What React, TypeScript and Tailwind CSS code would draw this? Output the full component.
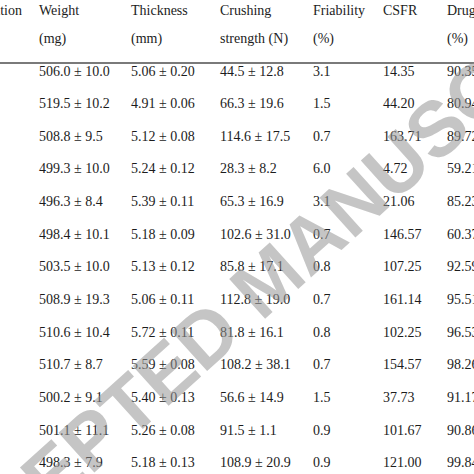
const HEAD_1 = ["Formulation", "Weight", "Thickness", "Crushing", "Friability", "CSFR", "Drug content"];
const HEAD_2 = ["", "(mg)", "(mm)", "strength (N)", "(%)", "", "(%)"];

const ROWS = [
  ["506.0 ± 10.0", "5.06 ± 0.20", "44.5 ± 12.8", "3.1", "14.35", "90.35"],
  ["519.5 ± 10.2", "4.91 ± 0.06", "66.3 ± 19.6", "1.5", "44.20", "80.94"],
  ["508.8 ± 9.5", "5.12 ± 0.08", "114.6 ± 17.5", "0.7", "163.71", "89.72"],
  ["499.3 ± 10.0", "5.24 ± 0.12", "28.3 ± 8.2", "6.0", "4.72", "59.21"],
  ["496.3 ± 8.4", "5.39 ± 0.11", "65.3 ± 16.9", "3.1", "21.06", "85.23"],
  ["498.4 ± 10.1", "5.18 ± 0.09", "102.6 ± 31.0", "0.7", "146.57", "60.37"],
  ["503.5 ± 10.0", "5.13 ± 0.12", "85.8 ± 17.1", "0.8", "107.25", "92.59"],
  ["508.9 ± 19.3", "5.06 ± 0.11", "112.8 ± 19.0", "0.7", "161.14", "95.51"],
  ["510.6 ± 10.4", "5.72 ± 0.11", "81.8 ± 16.1", "0.8", "102.25", "96.53"],
  ["510.7 ± 8.7", "5.59 ± 0.08", "108.2 ± 38.1", "0.7", "154.57", "98.26"],
  ["500.2 ± 9.1", "5.40 ± 0.13", "56.6 ± 14.9", "1.5", "37.73", "91.17"],
  ["501.1 ± 11.1", "5.26 ± 0.08", "91.5 ± 1.1", "0.9", "101.67", "90.86"],
  ["498.3 ± 7.9", "5.18 ± 0.13", "108.9 ± 20.9", "0.9", "121.00", "99.84"],
];

// column lefts: 39, 131, 220, 313, 383, 447
const GRID = "grid grid-cols-[39px_92px_89px_93px_70px_64px_1fr]";

export default function App() {
  return (
    <div className="relative w-[474px] h-[474px] overflow-hidden bg-white text-[#1c1c1c] text-[14px] leading-[18px] font-['Liberation_Serif',serif]">
      {/* header */}
      <div className="pt-[2px] h-[62px]">
        <div className={`${GRID} h-[28px]`}>
          {HEAD_1.map((h, i) =>
            i === 0 ? (
              <div key={i} className="flex justify-end pr-[17px] whitespace-nowrap">
                <span>{h}</span>
              </div>
            ) : (
              <div key={i} className="whitespace-nowrap">{h}</div>
            )
          )}
        </div>
        <div className={GRID}>
          {HEAD_2.map((h, i) => (
            <div key={i} className="whitespace-nowrap">{h}</div>
          ))}
        </div>
      </div>
      <div className="h-[1.5px] bg-[#7a7a7a]" />

      <div className="-mt-[1.5px] pt-[0.5px]">
        {ROWS.map((r, i) => (
          <div key={i} className={`${GRID} h-[32.67px] items-start`}>
            <div />
            {r.map((c, j) => (
              <div key={j} className="whitespace-nowrap">{c}</div>
            ))}
          </div>
        ))}
      </div>

      {/* watermark */}
      <div className="pointer-events-none absolute left-[269px] top-[279px] -translate-x-1/2 -translate-y-1/2 -rotate-[42deg] whitespace-nowrap font-['Liberation_Sans',sans-serif] font-bold text-[78px] leading-none text-[rgba(150,150,150,0.55)]">
        ACCEPTED MANUSCRIPT
      </div>
    </div>
  );
}
